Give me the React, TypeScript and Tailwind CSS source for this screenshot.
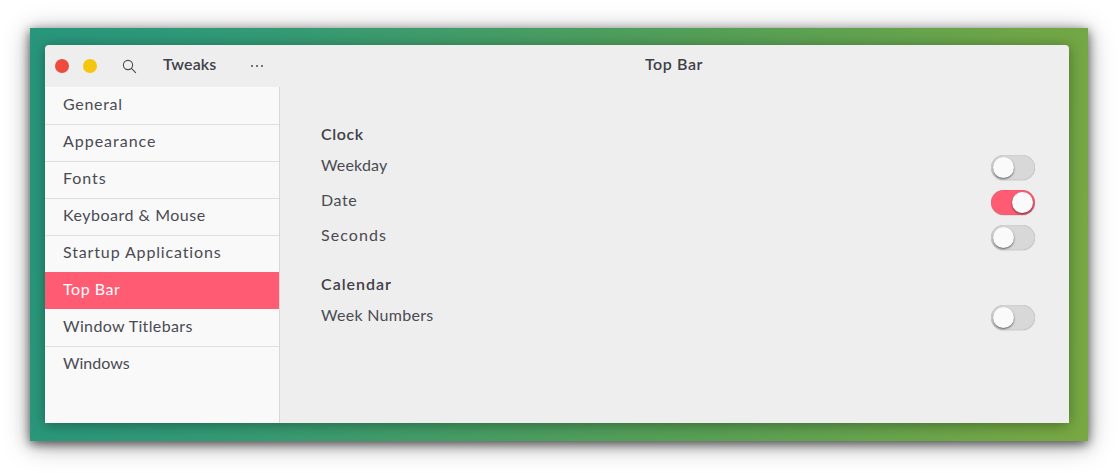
const sidebarItems = [
  { label: 'General', spacing: 'tracking-[0.7px]' },
  { label: 'Appearance', spacing: 'tracking-[0.98px]' },
  { label: 'Fonts', spacing: 'tracking-[0.92px]' },
  { label: 'Keyboard & Mouse', spacing: 'tracking-[0.51px]' },
  { label: 'Startup Applications', spacing: 'tracking-[0.86px]' },
  { label: 'Top Bar', spacing: 'tracking-[0.54px]', active: true },
  { label: 'Window Titlebars', spacing: 'tracking-[0.37px]', noBorder: true },
  { label: 'Windows', spacing: 'tracking-[0px]' },
];

function Toggle({ on }: { on?: boolean }) {
  return (
    <div
      className={`flex items-center w-[44px] h-[25px] mt-[2px] rounded-full px-[2px] shadow-[inset_0_0_1px_rgba(0,0,0,0.35),0_1px_1px_rgba(0,0,0,0.08)] ${
        on ? 'bg-[#ff5c74] justify-end' : 'bg-[#d8d8d8] justify-start'
      }`}
    >
      <div className="w-[21px] h-[21px] rounded-full bg-[#fafafa] shadow-[0_1px_2px_rgba(0,0,0,0.6)]" />
    </div>
  );
}

function SettingRow({ label, spacing, on }: { label: string; spacing: string; on?: boolean }) {
  return (
    <div className="flex items-center justify-between h-[35px] pr-[34px]">
      <span className={`mb-[4px] text-[16px] text-[#4a4b52] ${spacing}`}>{label}</span>
      <Toggle on={on} />
    </div>
  );
}

export default function App() {
  return (
    <div className="w-[1118px] h-[473px] bg-white pt-[28px] pl-[30px] overflow-hidden font-['Lato','Open_Sans',sans-serif]">
      {/* Wallpaper */}
      <div className="w-[1058px] h-[413px] pt-[17px] pl-[15px] bg-[linear-gradient(97deg,#27967c_0%,#339a75_22%,#559f56_62%,#78a842_100%)] shadow-[0_3px_10px_rgba(0,0,0,0.6),0_4px_24px_rgba(0,0,0,0.35)]">
        {/* Window */}
        <div className="flex flex-col w-[1024px] h-[378px] rounded-t-[4px] bg-[#eeeeee] shadow-[0_2px_14px_rgba(0,0,0,0.35)] overflow-hidden">
          {/* Header */}
          <div className="flex items-center h-[42px] shrink-0">
            <div className="flex items-center w-[234px] h-full shrink-0 pl-[10px]">
              <span className="w-[14px] h-[14px] rounded-full bg-[#ec4c3e]" />
              <span className="w-[14px] h-[14px] rounded-full bg-[#f4c70e] ml-[14px]" />
              <svg
                className="ml-[25px] mt-[1px]"
                width="15"
                height="15"
                viewBox="0 0 15 15"
                fill="none"
                stroke="#4a4b52"
                strokeWidth="1.1"
              >
                <circle cx="6" cy="6" r="4.6" />
                <path d="M9.4 9.4L13.6 13.6" strokeLinecap="round" />
              </svg>
              <span className="ml-[26px] mb-[5px] text-[16px] font-semibold tracking-[0.15px] text-[#3f4048]">Tweaks</span>
              <span className="ml-[34px] flex gap-[3px]">
                <span className="w-[2px] h-[2px] rounded-full bg-[#4a4b52]" />
                <span className="w-[2px] h-[2px] rounded-full bg-[#4a4b52]" />
                <span className="w-[2px] h-[2px] rounded-full bg-[#4a4b52]" />
              </span>
            </div>
            <div className="flex-1 flex justify-center">
              <span className="mb-[5px] text-[16px] font-semibold tracking-[0.6px] text-[#3f4048]">Top Bar</span>
            </div>
          </div>

          {/* Body */}
          <div className="flex flex-1 min-h-0">
            <div className="w-[235px] shrink-0 bg-[#f9f9f9] border-r border-[#d8d8d8]">
              {sidebarItems.map((item, i) => (
                <div
                  key={item.label}
                  className={`flex items-center h-[37px] pl-[18px] pb-[4px] text-[16px] ${item.spacing} ${
                    item.active
                      ? 'bg-[#ff5c74] text-white'
                      : `text-[#4a4b52] ${i === 0 || item.noBorder ? '' : 'border-t border-[#dfdfdf]'}`
                  }`}
                >
                  {item.label}
                </div>
              ))}
            </div>
            <div className="flex-1 pl-[41px] pt-[35px]">
              <div className="text-[16px] font-semibold tracking-[0.6px] text-[#3f4048] h-[27px] leading-[24px]">Clock</div>
              <SettingRow label="Weekday" spacing="tracking-[0.15px]" />
              <SettingRow label="Date" spacing="tracking-[0.55px]" on />
              <SettingRow label="Seconds" spacing="tracking-[1.07px]" />
              <div className="text-[16px] font-semibold tracking-[1px] text-[#3f4048] h-[24px] leading-[24px] mt-[18px]">Calendar</div>
              <div className="mt-[3px]">
                <SettingRow label="Week Numbers" spacing="tracking-[0.28px]" />
              </div>
            </div>
          </div>
        </div>
      </div>
    </div>
  );
}
